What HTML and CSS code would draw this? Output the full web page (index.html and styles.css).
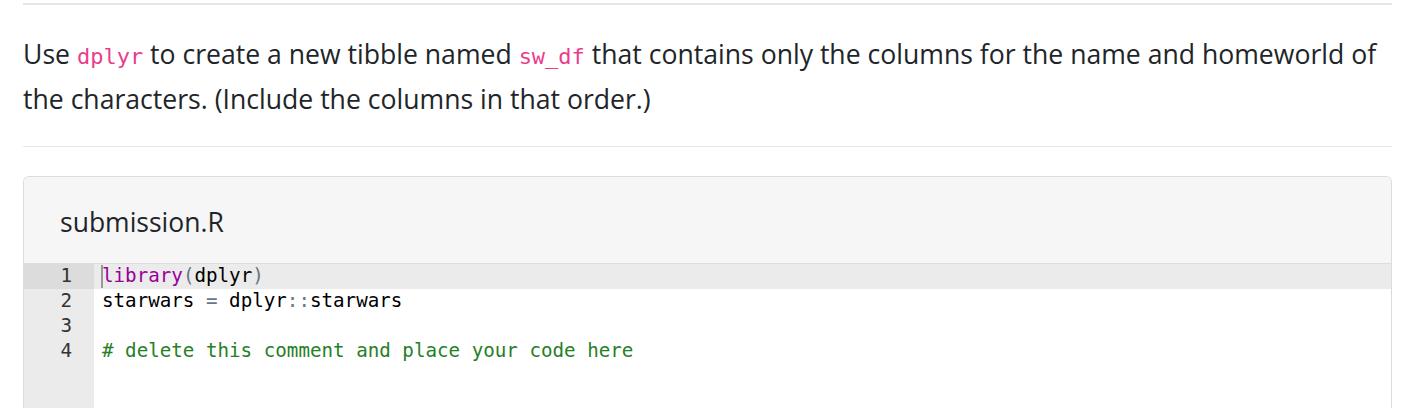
FILE: index.html
```html
<!DOCTYPE html>
<html>
<head>
<meta charset="utf-8">
<link rel="stylesheet" href="styles.css">
</head>
<body>
<div class="page">
  <hr class="rule rule-top">
  <p class="prompt">Use <code>dplyr</code> to create a new tibble named <code>sw_df</code> that contains only the columns for the name and homeworld of the characters. (Include the columns in that order.)</p>
  <hr class="rule rule-mid">
  <div class="card">
    <div class="card-header">submission.R</div>
    <div class="editor">
      <div class="gutter">
        <div class="ln active">1</div>
        <div class="ln">2</div>
        <div class="ln">3</div>
        <div class="ln">4</div>
      </div>
      <div class="code">
        <div class="line active"><span class="cursor"></span><span class="kw">library</span><span class="op">(</span>dplyr<span class="op">)</span></div>
        <div class="line">starwars <span class="op">=</span> dplyr<span class="op">::</span>starwars</div>
        <div class="line"> </div>
        <div class="line"><span class="cm"># delete this comment and place your code here</span></div>
      </div>
    </div>
  </div>
</div>
</body>
</html>
```
FILE: styles.css
```css
html, body {
  margin: 0;
  padding: 0;
  background: #fff;
}
body {
  font-family: "Open Sans", "Noto Sans", sans-serif;
  color: #212529;
  overflow: hidden;
}
.page {
  padding: 0 21px 0 23px;
}
.rule {
  border: 0;
  border-top: 1px solid #e5e5e5;
  margin: 0;
}
.rule-top {
  margin-top: 3px;
  border-top: 2px solid #e6e6e6;
}
.prompt {
  font-size: 26.6px;
  line-height: 45px;
  margin: 27px 0 24px 0;
}
.prompt code {
  font-family: "DejaVu Sans Mono", monospace;
  font-size: 22px;
  line-height: 1;
  color: #e83e8c;
}
.rule-mid {
  border-top-color: #e8e8e8;
}
.card {
  margin-top: 29px;
  border: 1px solid #dcdcdc;
  border-radius: 6px 6px 0 0;
  border-bottom: 0;
  overflow: hidden;
  height: 240px;
}
.card-header {
  background: #f6f6f6;
  border-bottom: 1px solid #dddddd;
  height: 87px;
  display: flex;
  align-items: center;
  padding: 3px 0 0 36px;
  box-sizing: border-box;
  font-size: 26.5px;
  color: #212529;
}
.editor {
  display: flex;
  font-family: "DejaVu Sans Mono", monospace;
  font-size: 19.2px;
  line-height: 24px;
  height: 200px;
}
.gutter {
  width: 70px;
  flex: none;
  background: #ebebeb;
  color: #333;
}
.ln {
  text-align: right;
  padding-right: 22px;
  height: 25px;
}
.ln.active {
  background: #dcdcdc;
}
.code {
  flex: 1;
  color: #000;
}
.line {
  height: 25px;
  padding-left: 8px;
  white-space: pre;
  position: relative;
}
.line.active {
  background: #ebebeb;
}
.cursor {
  position: absolute;
  left: 7px;
  top: 1px;
  width: 2px;
  height: 23px;
  background: #999;
}
.kw { color: #990099; }
.op { color: #687687; }
.cm { color: #267f26; }
```
